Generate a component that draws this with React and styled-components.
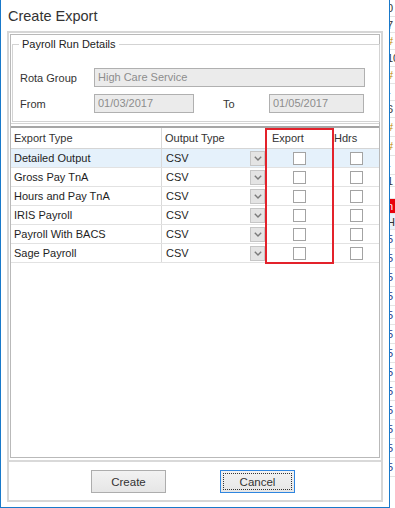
import React from 'react';
import styled, { createGlobalStyle } from 'styled-components';

const GlobalStyle = createGlobalStyle`
  html, body {
    margin: 0;
    padding: 0;
    background: #ffffff;
  }
  body {
    font-family: "Segoe UI", "Liberation Sans", Arial, sans-serif;
    font-size: 11px;
    color: #222;
  }
`;

const Screen = styled.div`
  display: flex;
  width: 395px;
  height: 508px;
  overflow: hidden;
`;

const Window = styled.div`
  width: 390px;
  height: 508px;
  box-sizing: border-box;
  border: 1px solid #1979ca;
  border-top: none;
  background: #ffffff;
  display: flex;
  flex-direction: column;
`;

const Title = styled.div`
  height: 31px;
  line-height: 32px;
  padding-left: 7px;
  font-size: 14.5px;
  color: #333;
  flex: none;
`;

const Panel = styled.div`
  flex: 1;
  margin: 0 6px 5px 6px;
  border: 2px solid #d6d6d6;
  display: flex;
  flex-direction: column;
  min-height: 0;
`;

const Frame = styled.div`
  flex: 1;
  margin: 1px 1px 0 1px;
  border: 1px solid #b9b9b9;
  display: flex;
  flex-direction: column;
  min-height: 0;
`;

// top: payroll run details
const TopSection = styled.div`
  padding: 1px;
  border-bottom: 1px solid #d4d4d4;
`;

const GroupBox = styled.fieldset`
  margin: 0;
  border: 1px solid #d3d3d3;
  padding: 16px 14px 8px 6px;
  display: flex;
  flex-direction: column;
  gap: 7px;
`;

const Legend = styled.legend`
  padding: 0 3px;
  line-height: 16px;
  color: #222;
`;

const FieldRow = styled.div`
  display: flex;
  align-items: center;
`;

const Label = styled.span`
  width: ${p => p.$w}px;
  margin-left: ${p => p.$ml || 1}px;
  color: #333;
  flex: none;
`;

const ReadOnly = styled.div`
  width: ${p => p.$w}px;
  height: 19px;
  box-sizing: border-box;
  border: 1px solid #b0b0b0;
  background: #ebebeb;
  color: #8d8d8d;
  padding-left: 3px;
  line-height: 17px;
  flex: none;
`;

const Splitter = styled.div`
  height: 2px;
  margin-top: 2px;
  background: #a6a6a6;
  flex: none;
`;

// grid
const Grid = styled.div`
  flex: 1;
  position: relative;
  background: #ffffff;
`;

const Row = styled.div`
  display: flex;
  height: ${p => (p.$head ? 21 : 19)}px;
  box-sizing: border-box;
  border-bottom: 1px solid ${p => (p.$head ? '#d5d5d5' : '#e2e2e2')};
  background: ${p => (p.$sel ? '#e5f1fb' : 'transparent')};
`;

const Cell = styled.div`
  width: ${p => p.$w}px;
  box-sizing: border-box;
  border-right: ${p => (p.$last ? 'none' : '1px solid #d9d9d9')};
  padding-left: ${p => p.$pl ?? 3}px;
  display: flex;
  align-items: center;
  justify-content: ${p => (p.$center ? 'center' : 'flex-start')};
  color: ${p => (p.$head ? '#333' : '#1e1e1e')};
  flex: none;
  overflow: hidden;
  white-space: nowrap;
`;

const CellText = styled.span`
  flex: 1;
`;

const DropButton = styled.div`
  width: 15px;
  height: 15px;
  box-sizing: border-box;
  margin-right: 1px;
  background: #e4e4e4;
  border: 1px solid #c6c6c6;
  display: flex;
  align-items: center;
  justify-content: center;
  flex: none;
`;

const CheckBox = styled.div`
  width: 13px;
  height: 13px;
  box-sizing: border-box;
  border: 1px solid #a3a3a3;
  background: #ffffff;
`;

const Highlight = styled.div`
  position: absolute;
  left: 254px;
  top: 0;
  width: 69px;
  height: 136px;
  box-sizing: border-box;
  border: 2px solid #e3222b;
  pointer-events: none;
`;

// bottom buttons
const ButtonBar = styled.div`
  margin-top: 2px;
  border-top: 2px solid #d9d9d9;
  height: 40px;
  box-sizing: border-box;
  padding: 8px 4px 0 0;
  display: flex;
  justify-content: center;
  gap: 54px;
  flex: none;
`;

const Button = styled.button`
  width: 75px;
  height: 23px;
  box-sizing: border-box;
  border: 1px solid ${p => (p.$focus ? '#2f86e0' : '#adadad')};
  background: linear-gradient(#f2f2f2, #e6e6e6);
  font: inherit;
  font-size: 11.5px;
  color: #333;
  padding: 0;
  outline: ${p => (p.$focus ? '1px dotted #333' : 'none')};
  outline-offset: -4px;
`;

// bit of the app behind the dialog
const Behind = styled.div`
  width: 5px;
  display: flex;
  flex-direction: column;
  overflow: hidden;
  background: #ffffff;
`;

const BehindRow = styled.div`
  height: ${p => p.$h}px;
  flex: none;
  box-sizing: border-box;
  border-bottom: 1px solid #e4e4e4;
  background: ${p => p.$bg || 'transparent'};
  color: ${p => p.$c || '#333'};
  font-size: 11px;
  line-height: ${p => p.$h}px;
  margin-left: -3px;
  white-space: nowrap;
`;

const Chevron = () => (
  <svg width="8" height="5" viewBox="0 0 8 5">
    <path d="M0.8 0.8 L4 4 L7.2 0.8" fill="none" stroke="#7a7a7a" strokeWidth="1.4" />
  </svg>
);

const exports = [
  'Detailed Output',
  'Gross Pay TnA',
  'Hours and Pay TnA',
  'IRIS Payroll',
  'Payroll With BACS',
  'Sage Payroll',
];

const behind = [
  { h: 17, t: '0' }, { h: 16, t: '7' }, { h: 17, t: '#', c: '#c58a00' }, { h: 17, t: '10' },
  { h: 17, t: '#', c: '#c58a00' }, { h: 17, t: '-' }, { h: 17, t: '6' }, { h: 19, t: '#', c: '#c58a00' },
  { h: 19, t: '#', c: '#c58a00' }, { h: 19, t: '-' }, { h: 12, t: '1' }, { h: 12, t: '' },
  { h: 15, t: 'n', bg: '#e8000b', c: '#fff' }, { h: 16, t: 'H', bg: '#eaf2fb' },
  ...Array.from({ length: 13 }, () => ({ h: 19, t: '5', c: '#2b3f8f' })),
];

const App = () => {
  return (
    <Screen>
      <GlobalStyle />
      <Window>
        <Title>Create Export</Title>
        <Panel>
          <Frame>
            <TopSection>
              <GroupBox>
                <Legend>Payroll Run Details</Legend>
                <FieldRow>
                  <Label $w={74}>Rota Group</Label>
                  <ReadOnly $w={271}>High Care Service</ReadOnly>
                </FieldRow>
                <FieldRow>
                  <Label $w={74}>From</Label>
                  <ReadOnly $w={100}>01/03/2017</ReadOnly>
                  <Label $w={46} $ml={29}>To</Label>
                  <ReadOnly $w={95}>01/05/2017</ReadOnly>
                </FieldRow>
              </GroupBox>
            </TopSection>
            <Splitter />
            <Grid>
              <Row $head>
                <Cell $w={151} $head>Export Type</Cell>
                <Cell $w={105} $head>Output Type</Cell>
                <Cell $w={66} $pl={5} $head>Export</Cell>
                <Cell $w={46} $pl={1} $head $last>Hdrs</Cell>
              </Row>
              {exports.map((name, i) => (
                <Row key={name} $sel={i === 0}>
                  <Cell $w={151}>{name}</Cell>
                  <Cell $w={105} $pl={4}>
                    <CellText>CSV</CellText>
                    <DropButton><Chevron /></DropButton>
                  </Cell>
                  <Cell $w={66} $pl={0} $center><CheckBox /></Cell>
                  <Cell $w={46} $pl={0} $center $last><CheckBox /></Cell>
                </Row>
              ))}
              <Highlight />
            </Grid>
          </Frame>
          <ButtonBar>
            <Button>Create</Button>
            <Button $focus>Cancel</Button>
          </ButtonBar>
        </Panel>
      </Window>
      <Behind>
        {behind.map((r, i) => (
          <BehindRow key={i} $h={r.h} $c={r.c} $bg={r.bg}>{r.t}</BehindRow>
        ))}
      </Behind>
    </Screen>
  );
};

export default App;
